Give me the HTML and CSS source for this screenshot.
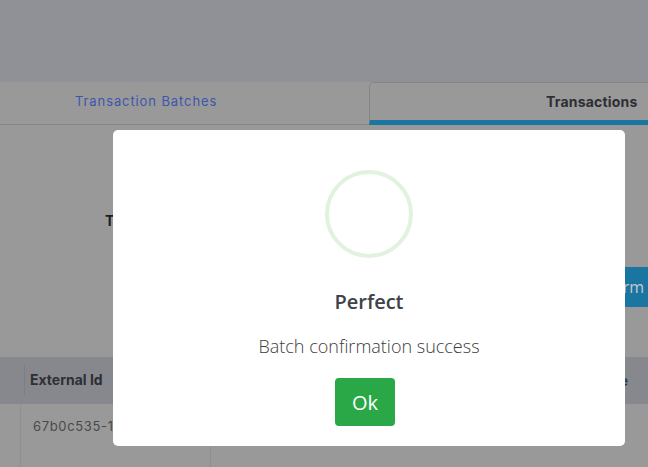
FILE: index.html
```html
<!DOCTYPE html>
<html lang="en">
<head>
<meta charset="utf-8">
<title>Transactions</title>
<link rel="stylesheet" href="styles.css">
</head>
<body>
<div class="page">
  <header class="topbar"></header>
  <nav class="tabs">
    <div class="tab tab-batches">Transaction Batches</div>
    <div class="tab tab-active">Transactions</div>
  </nav>
  <section class="summary">
    <div class="summary-title">Transactions</div>
    <div class="summary-actions"><button class="confirm" type="button">Confirm</button></div>
  </section>
  <div class="thead">
    <div class="th th-id">External Id</div>
    <div class="th th-last">e</div>
  </div>
  <div class="trow">
    <div class="td td-id">67b0c535-1</div>
    <div class="td td-next"></div>
  </div>
</div>
<div class="overlay">
  <div class="modal">
    <div class="success-ring"></div>
    <h2 class="modal-title">Perfect</h2>
    <p class="modal-text">Batch confirmation success</p>
    <button class="ok" type="button">Ok</button>
  </div>
</div>
</body>
</html>
```
FILE: styles.css
```css
* { box-sizing: border-box; }
html, body { margin: 0; height: 100%; overflow: hidden; }
body { background: #999999; font-family: "Inter", "Liberation Sans", sans-serif; color: #2f3036; }
.page { width: 648px; height: 467px; overflow: hidden; }
.topbar { height: 82px; background: #909196; }
.tabs { display: flex; height: 43px; }
.tab { line-height: 38px; white-space: nowrap; }
.tab-batches { width: 369px; padding-left: 75px; font-size: 13px; color: #3d56ad; border-bottom: 1px solid #858585; letter-spacing: .9px; }
.tab-active { flex: 1; padding-left: 176px; font-size: 14px; letter-spacing: .2px; font-weight: 700; color: #2e2f35; border: 1px solid #858585; border-bottom: 5px solid #1a75a0; border-right: 0; border-radius: 5px 0 0 0; }
.summary { height: 232px; padding-left: 105px; display: flex; flex-direction: column; }
.summary-title { margin-top: 87px; font-size: 14px; font-weight: 700; line-height: 18px; color: #1d1e22; }
.summary-actions { display: flex; justify-content: flex-end; margin-top: 37px; }
.confirm { width: 98px; height: 40px; margin-right: -15px; border: 0; padding: 0; background: #1a75a0; color: #c9c9c9; font: 500 16px "Open Sans", sans-serif; }
.thead { display: flex; justify-content: space-between; align-items: center; height: 47px; background: #86888d; font-size: 14px; font-weight: 700; color: #2e2f35; padding-left: 24px; padding-right: 20px; }
.th-id { border-left: 1px solid #7c7e82; padding-left: 5px; line-height: 30px; margin-top: -1px; }
.th-last { color: #2b3a55; margin-top: -1px; }
.trow { display: flex; height: 63px; padding-left: 20px; color: #4a4a4a; font-size: 13px; }
.td { border-left: 1px solid #8f8f8f; }
.td-id { width: 190px; padding-left: 12px; padding-top: 13px; line-height: 18px; letter-spacing: .65px; white-space: nowrap; }
.overlay { position: fixed; inset: 0; padding: 130px 23px 21px 113px; }
.modal { height: 316px; background: #fff; border-radius: 5px; display: flex; flex-direction: column; align-items: center; padding-top: 40px; font-family: "Open Sans", sans-serif; }
.success-ring { width: 88px; height: 88px; border: 4px solid #e1f2df; border-radius: 50%; }
.modal-title { margin: 30px 0 0; font-size: 20px; line-height: 28px; font-weight: 600; color: #404149; }
.modal-text { margin: 18px 0 0; font-size: 18px; line-height: 25px; font-weight: 300; color: #3d3d3d; }
.ok { margin: 19px 8px 0 0; width: 60px; height: 48px; border: 0; padding: 0; border-radius: 4px; background: #2aa847; color: #fff; font: 500 20px "Open Sans", sans-serif; }
```
